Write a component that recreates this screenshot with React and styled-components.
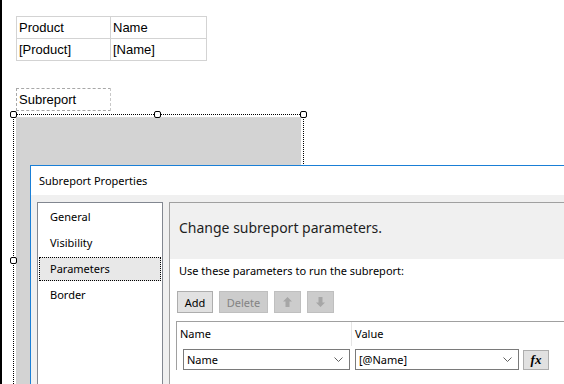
import React from 'react';
import styled, { createGlobalStyle } from 'styled-components';

const GlobalStyle = createGlobalStyle`
  body {
    margin: 0;
    background: #ffffff;
  }
`;

const uiFont = `"Noto Sans", "Open Sans", sans-serif`;

const Page = styled.div`
  position: relative;
  box-sizing: border-box;
  width: 564px;
  height: 384px;
  overflow: hidden;
  border-left: 2px solid #000000;
  padding: 16px 0 0 14px;
  font-family: "Liberation Sans", Arial, sans-serif;
  font-size: 13px;
  color: #000000;
`;

const ReportTable = styled.div`
  display: grid;
  grid-template-columns: 94px 96px;
  grid-auto-rows: 22px;
  width: 190px;
  border-top: 1px solid #d3d3d3;
  border-left: 1px solid #d3d3d3;
`;

const Cell = styled.div`
  border-right: 1px solid #d3d3d3;
  border-bottom: 1px solid #d3d3d3;
  padding-left: 2px;
  line-height: 22px;
  white-space: nowrap;
`;

const SubreportLabel = styled.div`
  box-sizing: border-box;
  width: 95px;
  height: 23px;
  margin-top: 27px;
  border: 1px dashed #a8a8a8;
  border-right-color: #c8c8c8;
  padding-left: 2px;
  line-height: 21px;
`;

const SelectionFrame = styled.div`
  position: relative;
  box-sizing: border-box;
  width: 291px;
  height: 300px;
  margin: 3px 0 0 -3px;
  border: 1px dotted #000000;
  padding: 2px;
`;

const GrayFill = styled.div`
  height: 100%;
  background: #d3d3d3;
  border-top: 1px solid #dadada;
`;

const Handle = styled.div`
  position: absolute;
  box-sizing: border-box;
  width: 7px;
  height: 7px;
  border: 1px solid #000000;
  border-radius: 2px;
  background: #ffffff;
  left: ${(p) => p.$x}px;
  top: ${(p) => p.$y}px;
`;

const Dialog = styled.div`
  position: absolute;
  left: 28px;
  top: 165px;
  width: 600px;
  height: 260px;
  border-top: 1px solid #1a7fd6;
  border-left: 1px solid #1a7fd6;
  font-family: ${uiFont};
  font-size: 11px;
  color: #000000;
`;

const TitleBar = styled.div`
  height: 29px;
  background: #ffffff;
  padding-left: 8px;
  line-height: 29px;
`;

const DialogBody = styled.div`
  display: flex;
  gap: 6px;
  height: 100%;
  background: #f0f0f0;
  padding: 7px 0 0 6px;
`;

const NavPanel = styled.ul`
  box-sizing: border-box;
  flex: 0 0 126px;
  height: 240px;
  margin: 0;
  padding: 2px 1px;
  list-style: none;
  background: #ffffff;
  border: 1px solid #828790;
`;

const NavItem = styled.li`
  box-sizing: border-box;
  height: 24px;
  margin-bottom: 2px;
  padding-left: 10px;
  line-height: 22px;
  border: 1px ${(p) => (p.$active ? 'dotted #000000' : 'solid transparent')};
  background: ${(p) => (p.$active ? '#e8e8e8' : 'transparent')};
`;

const ContentPanel = styled.div`
  flex: 1;
  height: 240px;
  border: 1px solid #a0a0a0;
  background: #ffffff;
`;

const PanelHeader = styled.div`
  height: 56px;
  background: #f0f0f0;
  padding-left: 9px;
  line-height: 50px;
  font-size: 14px;
  color: #1e1e1e;
`;

const PanelBody = styled.div`
  padding: 0 0 0 7px;
`;

const Hint = styled.div`
  margin-left: 2px;
  line-height: 23px;
`;

const Toolbar = styled.div`
  display: flex;
  gap: 6px;
  margin-top: 9px;
`;

const Button = styled.button`
  box-sizing: border-box;
  display: flex;
  align-items: center;
  justify-content: center;
  width: ${(p) => p.$w}px;
  height: 22px;
  padding: 0;
  font-family: ${uiFont};
  font-size: 11px;
  color: ${(p) => (p.disabled ? '#838383' : '#000000')};
  background: ${(p) => (p.disabled ? '#cccccc' : '#e1e1e1')};
  border: 1px solid ${(p) => (p.disabled ? '#bfbfbf' : '#adadad')};
`;

const ParamGrid = styled.div`
  margin: 8px 0 0 -1px;
  border-top: 1px solid #a0a0a0;
  border-left: 1px solid #a0a0a0;
`;

const GridHeader = styled.div`
  display: grid;
  grid-template-columns: 175px 1fr;
  height: 24px;
`;

const HeaderCell = styled.div`
  padding-left: 3px;
  line-height: 23px;
  border-right: ${(p) => (p.$divider ? '1px solid #e5e5e5' : 'none')};
`;

const GridRow = styled.div`
  display: flex;
  align-items: center;
  gap: 4px;
  padding: 3px 0 0 6px;
`;

const Combo = styled.div`
  box-sizing: border-box;
  display: flex;
  align-items: center;
  justify-content: space-between;
  width: ${(p) => p.$w}px;
  height: 21px;
  padding: 0 6px 0 3px;
  background: #ffffff;
  border: 1px solid #7a7a7a;
  margin-right: ${(p) => p.$gap || 0}px;
`;

const FxButton = styled.div`
  box-sizing: border-box;
  display: flex;
  align-items: center;
  justify-content: center;
  width: 26px;
  height: 20px;
  background: #e1e1e1;
  border: 1px solid #adadad;
  font-family: "Liberation Serif", "Times New Roman", serif;
  font-style: italic;
  font-weight: bold;
  font-size: 13px;
`;

const Chevron = () => (
  <svg width="9" height="5" viewBox="0 0 9 5">
    <polyline points="0.5,0.5 4.5,4.5 8.5,0.5" fill="none" stroke="#606060" strokeWidth="1" />
  </svg>
);

const Arrow = ({ down }) => (
  <svg width="9" height="10" viewBox="0 0 9 10" style={down ? { transform: 'rotate(180deg)' } : undefined}>
    <path d="M4.5 0 L9 4.5 L6.5 4.5 L6.5 10 L2.5 10 L2.5 4.5 L0 4.5 Z" fill="#a6a6a6" />
  </svg>
);

const navItems = ['General', 'Visibility', 'Parameters', 'Border'];

const App = () => (
  <Page>
    <GlobalStyle />
    <ReportTable>
      <Cell>Product</Cell>
      <Cell>Name</Cell>
      <Cell>[Product]</Cell>
      <Cell>[Name]</Cell>
    </ReportTable>
    <SubreportLabel>Subreport</SubreportLabel>
    <SelectionFrame>
      <GrayFill />
      <Handle $x={-4} $y={-4} />
      <Handle $x={140} $y={-4} />
      <Handle $x={286} $y={-4} />
      <Handle $x={-4} $y={142} />
    </SelectionFrame>

    <Dialog>
      <TitleBar>Subreport Properties</TitleBar>
      <DialogBody>
        <NavPanel>
          {navItems.map((item) => (
            <NavItem key={item} $active={item === 'Parameters'}>
              {item}
            </NavItem>
          ))}
        </NavPanel>
        <ContentPanel>
          <PanelHeader>Change subreport parameters.</PanelHeader>
          <PanelBody>
            <Hint>Use these parameters to run the subreport:</Hint>
            <Toolbar>
              <Button $w={36}>Add</Button>
              <Button $w={49} disabled>
                Delete
              </Button>
              <Button $w={27} disabled>
                <Arrow />
              </Button>
              <Button $w={27} disabled>
                <Arrow down />
              </Button>
            </Toolbar>
            <ParamGrid>
              <GridHeader>
                <HeaderCell $divider>Name</HeaderCell>
                <HeaderCell>Value</HeaderCell>
              </GridHeader>
              <GridRow>
                <Combo $w={167} $gap={1}>
                  Name
                  <Chevron />
                </Combo>
                <Combo $w={164}>
                  [@Name]
                  <Chevron />
                </Combo>
                <FxButton>fx</FxButton>
              </GridRow>
            </ParamGrid>
          </PanelBody>
        </ContentPanel>
      </DialogBody>
    </Dialog>
  </Page>
);

export default App;
